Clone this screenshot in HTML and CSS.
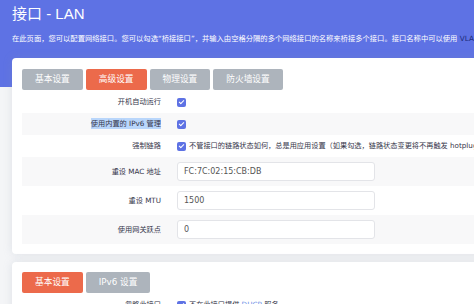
FILE: index.html
```html
<!DOCTYPE html>
<html lang="zh-CN">

<head>
    <meta charset="UTF-8">
    <meta name="viewport" content="width=device-width, initial-scale=1.0">
    <title>接口 - LAN</title>
    <link rel="stylesheet" href="styles.css">
</head>

<body>
    <div class="header">
        <h2>接口 - LAN</h2>
        <p class="desc">在此页面，您可以配置网络接口。您可以勾选“桥接接口”，并输入由空格分隔的多个网络接口的名称来桥接多个接口。接口名称中可以使用 <a href="#">VLAN</a> 记法 INTERFACE.VLANNR（例如：eth0.1）。</p>
    </div>

    <div class="main">
        <div class="card">
            <ul class="tabs">
                <li class="tab">基本设置</li>
                <li class="tab active">高级设置</li>
                <li class="tab">物理设置</li>
                <li class="tab">防火墙设置</li>
            </ul>

            <div class="row">
                <label class="row-label">开机自动运行</label>
                <div class="row-field"><span class="check"></span></div>
            </div>

            <div class="row alt">
                <label class="row-label"><span class="hl">使用内置的 IPv6 管理</span></label>
                <div class="row-field"><span class="check"></span></div>
            </div>

            <div class="row">
                <label class="row-label">强制链路</label>
                <div class="row-field">
                    <span class="check"></span>
                    <span class="hint">不管接口的链路状态如何，总是用应用设置（如果勾选，链路状态变更将不再触发 hotplug 脚本）</span>
                </div>
            </div>

            <div class="row tall alt">
                <label class="row-label">重设 MAC 地址</label>
                <div class="row-field"><input class="text" type="text" value="FC:7C:02:15:CB:DB"></div>
            </div>

            <div class="row tall">
                <label class="row-label">重设 MTU</label>
                <div class="row-field"><input class="text" type="text" placeholder="1500"></div>
            </div>

            <div class="row tall alt">
                <label class="row-label">使用网关跃点</label>
                <div class="row-field"><input class="text" type="text" placeholder="0"></div>
            </div>
        </div>

        <div class="card">
            <ul class="tabs">
                <li class="tab active">基本设置</li>
                <li class="tab">IPv6 设置</li>
            </ul>

            <div class="row">
                <label class="row-label">忽略此接口</label>
                <div class="row-field">
                    <span class="check"></span>
                    <span class="hint">不在此接口提供 <abbr>DHCP</abbr> 服务。</span>
                </div>
            </div>
        </div>
    </div>
</body>

</html>
```

FILE: styles.css
```css
* {
    margin: 0;
    padding: 0;
    box-sizing: border-box;
}

body {
    font-family: "DejaVu Sans", "Noto Sans CJK SC", sans-serif;
    color: #35354a;
    background: #f4f5f7;
    overflow: hidden;
}

.header {
    background: #5e72e4;
    color: white;
    height: 87px;
    padding: 0 12px;
}

.header h2 {
    font-family: "Liberation Sans", "Noto Sans CJK SC", sans-serif;
    font-size: 15px;
    font-weight: normal;
    line-height: 18px;
    padding-top: 5px;
}

.desc {
    margin-top: 10px;
    font-size: 7.3px;
    line-height: 12px;
    white-space: nowrap;
}

.desc a {
    color: #1d2c7a;
    text-decoration: none;
}

.main {
    padding: 0 12px;
    margin-top: -29px;
}

.card {
    width: 580px;
    background: white;
    border-radius: 4px;
    padding: 11px 10px 10px;
    margin-bottom: 8px;
    box-shadow: 0 0 10px rgba(136, 152, 170, 0.2);
}

.card + .card {
    padding-top: 10px;
}

.tabs {
    list-style: none;
    display: flex;
    gap: 3px;
    margin-bottom: 1px;
}

.tab {
    background: #adb4bc;
    color: white;
    font-size: 8.7px;
    line-height: 21px;
    padding: 0 13px;
    border-radius: 2px;
}

.tab.active {
    background: #ec6a4b;
}

.row {
    display: grid;
    grid-template-columns: 139px 1fr;
    column-gap: 16px;
    align-items: center;
    height: 22px;
    font-size: 7.2px;
    line-height: 12px;
}

.row.tall {
    height: 29px;
}

.row.alt {
    background: #f8f8f9;
}

.row-label {
    text-align: right;
}

.hl {
    background: #b9d6fb;
    padding: 1px 0;
}

.row-field {
    display: flex;
    align-items: center;
    gap: 3px;
    white-space: nowrap;
}

.check {
    position: relative;
    display: inline-block;
    width: 9px;
    height: 9px;
    border-radius: 2px;
    background: #5e72e4;
    flex-shrink: 0;
}

/* white tick */
.check::after {
    content: "";
    position: absolute;
    left: 3px;
    top: 1.3px;
    width: 2px;
    height: 4px;
    border: solid white;
    border-width: 0 1.2px 1.2px 0;
    transform: rotate(45deg);
}

.hint abbr {
    color: #6b8ee6;
    text-decoration: none;
}

.text {
    width: 198px;
    height: 19px;
    border: 1px solid #e3e4e8;
    border-radius: 3px;
    padding: 0 6px;
    font-family: "DejaVu Sans", "Noto Sans CJK SC", sans-serif;
    font-size: 8px;
    color: #555;
    background: white;
    outline: none;
}

.text::placeholder {
    color: #555;
}
```
